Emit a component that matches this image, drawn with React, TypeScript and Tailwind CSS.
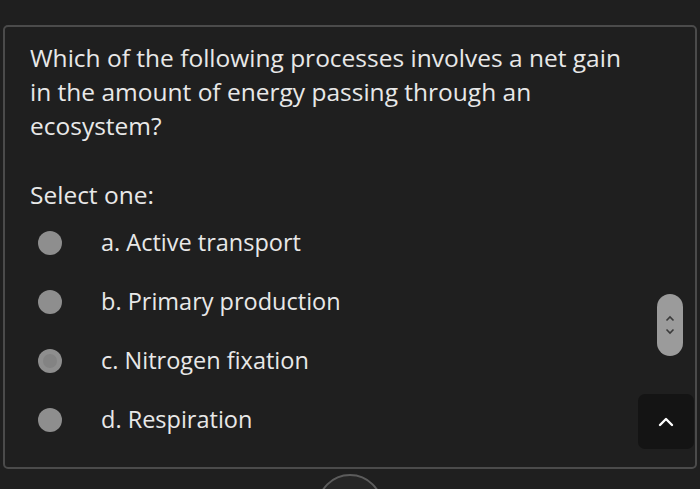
import React from 'react';

const options = ['a. Active transport', 'b. Primary production', 'c. Nitrogen fixation', 'd. Respiration'];

const Radio: React.FC<{ dim?: boolean }> = ({ dim }) => (
  <span className="flex h-[24px] w-[24px] items-center justify-center rounded-full bg-[#8e8e8e]">
    {dim && <span className="h-[14px] w-[14px] rounded-full bg-[#838383]" />}
  </span>
);

export default function App() {
  return (
    <div
      className="relative h-[489px] w-[700px] overflow-hidden bg-[#1f1f1f] pt-[25px] pl-[3px] pr-[3px] text-[#e8e8e8]"
      style={{ fontFamily: '"Open Sans", "Noto Sans", sans-serif' }}
    >
      <div className="relative h-[444px] rounded-[5px] border-2 border-[#4b4b4b] pl-[25px] pt-[14px]">
        <p className="text-[24.5px] leading-[34px]">
          Which of the following processes involves a net gain
          <br />
          in the amount of energy passing through an
          <br />
          ecosystem?
        </p>
        <p className="mt-[35px] text-[24.5px] leading-[34px]">Select one:</p>
        <ul className="mt-[1px] flex flex-col">
          {options.map((o, i) => (
            <li key={o} className="flex h-[59px] items-center">
              <span className="ml-[8px]">
                <Radio dim={i === 2} />
              </span>
              <span className="ml-[39px] text-[23.5px]">{o}</span>
            </li>
          ))}
        </ul>

        <div className="absolute right-[12px] top-[267px] flex h-[62px] w-[26px] flex-col items-center justify-center gap-[6px] rounded-full bg-[#9b9b9b]">
          <svg width="10" height="7" viewBox="0 0 10 7" fill="none" stroke="#3a3a3a" strokeWidth="1.6">
            <path d="M1.5 5.5 5 2l3.5 3.5" />
          </svg>
          <svg width="10" height="7" viewBox="0 0 10 7" fill="none" stroke="#3a3a3a" strokeWidth="1.6">
            <path d="M1.5 1.5 5 5l3.5-3.5" />
          </svg>
        </div>

        <div className="absolute right-[1px] top-[367px] flex h-[55px] w-[56px] items-center justify-center rounded-[7px] bg-[#141414]">
          <svg width="16" height="10" viewBox="0 0 16 10" fill="none" stroke="#ffffff" strokeWidth="2.4" strokeLinecap="round" strokeLinejoin="round">
            <path d="M2 8 8 2l6 6" />
          </svg>
        </div>
      </div>

      <div className="absolute left-[317px] top-[474px] h-[66px] w-[66px] rounded-full border-2 border-[#5c5c5c] bg-[#262626]" />
    </div>
  );
}
